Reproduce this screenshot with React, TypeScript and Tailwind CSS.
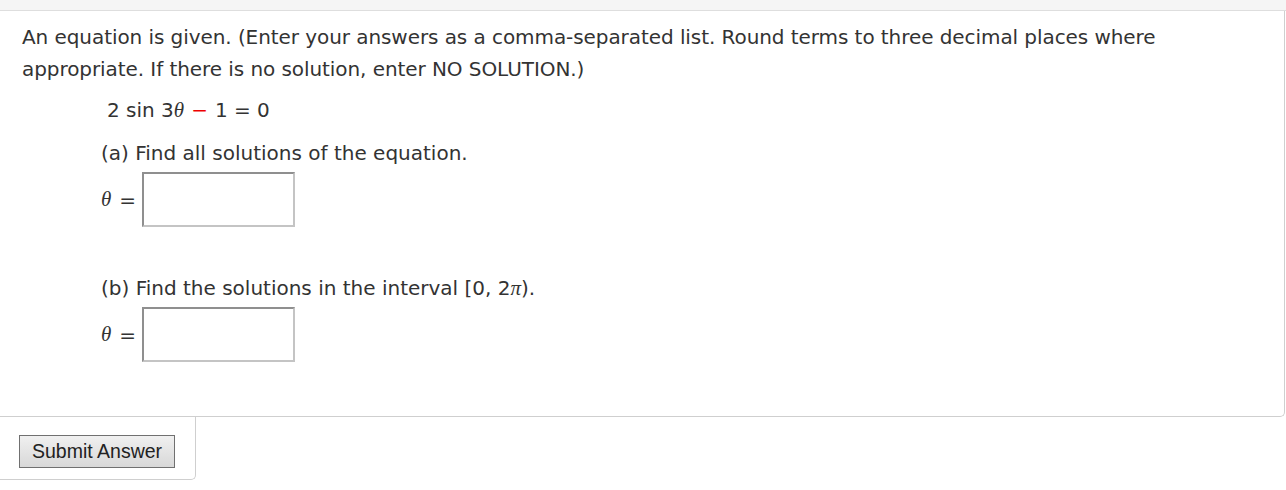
import React from 'react';

const AnswerRow: React.FC = () => (
  <div className="flex items-center pl-[101px]">
    <span className="font-['Liberation_Serif',serif] italic text-[21px]">θ</span>
    <span className="ml-[8px] mr-[6px]">=</span>
    <input
      type="text"
      className="w-[153px] h-[55px] bg-white border-2 border-t-[#8f8f8f] border-l-[#8f8f8f] border-r-[#c4c4c4] border-b-[#c4c4c4] outline-none"
    />
  </div>
);

export default function App() {
  return (
    <div className="w-[1286px] h-[490px] bg-white text-[#333] font-['DejaVu_Sans',Verdana,sans-serif] text-[20px]">
      <div className="h-[11px] bg-[#f5f5f5] border-b border-[#dedede]" />
      <div className="w-[1285px] h-[406px] border-r border-b border-[#cfcfcf] rounded-br-[5px]">
        <p className="pl-[22px] pt-[10px] leading-[32px] tracking-[-0.07px]">
          An equation is given. (Enter your answers as a comma-separated list. Round terms to three decimal places where
          <br />
          appropriate. If there is no solution, enter NO SOLUTION.)
        </p>
        <div className="pl-[107px] mt-[10px] leading-[30px]">
          2 sin 3<span className="font-['Liberation_Serif',serif] italic text-[21px]">θ</span>
          <span className="text-[#e00] mx-[7px]">−</span>1 = 0
        </div>
        <div className="pl-[101px] mt-[13px] leading-[30px]">(a) Find all solutions of the equation.</div>
        <div className="mt-[4px]">
          <AnswerRow />
        </div>
        <div className="pl-[101px] mt-[46px] leading-[30px]">
          (b) Find the solutions in the interval [0, 2<span className="font-['Liberation_Serif',serif] italic text-[21px]">π</span>).
        </div>
        <div className="mt-[4px]">
          <AnswerRow />
        </div>
      </div>
      <div className="w-[196px] h-[63px] border-r border-b border-[#cfcfcf] rounded-br-[5px] pl-[19px] pt-[18px]">
        <button className="h-[33px] px-[12px] border border-[#707070] bg-gradient-to-b from-[#f0f0f0] to-[#d8d8d8] font-['Liberation_Sans',Arial,sans-serif] text-[19.5px] text-[#222] leading-none">
          Submit Answer
        </button>
      </div>
    </div>
  );
}
